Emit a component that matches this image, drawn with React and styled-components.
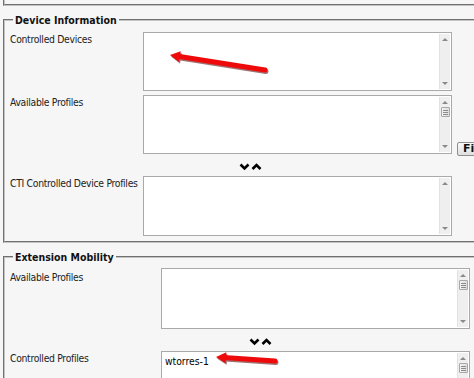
import React from 'react';
import styled, { createGlobalStyle } from 'styled-components';

const GlobalStyle = createGlobalStyle`
  body {
    margin: 0;
    background: #f6f6f6;
    overflow: hidden;
    font-family: "DejaVu Sans Condensed", "DejaVu Sans", Verdana, sans-serif;
  }
`;

const Page = styled.div`
  position: relative;
  width: 560px;
  height: 378px;
`;

const PrevSection = styled.div`
  height: 4px;
  margin-left: 3px;
  border: 2px groove #c4c4c4;
  border-top: none;
`;

const Fieldset = styled.fieldset`
  margin: 8px 0 0 3px;
  padding: ${p => p.$padTop}px 0 5px 5px;
  border: 2px groove #c4c4c4;
  min-width: 0;
`;

const Legend = styled.legend`
  margin-left: 3px;
  padding: 0 2px;
  font-size: 10.5px;
  line-height: 12px;
  font-weight: bold;
  color: #111;
`;

const Row = styled.div`
  display: flex;
  align-items: flex-end;
  margin-bottom: ${p => p.$gap || 0}px;
`;

const Label = styled.div`
  align-self: flex-start;
  width: ${p => p.$width}px;
  flex: none;
  padding-top: ${p => p.$top || 1}px;
  font-size: 10.3px;
  line-height: 13px;
  letter-spacing: -0.3px;
  color: #222;
  white-space: nowrap;
`;

const ListBox = styled.div`
  display: flex;
  width: 309px;
  height: ${p => p.$height}px;
  box-sizing: border-box;
  border: 1px solid #a9a9a9;
  background: #fff;
  flex: none;
`;

const Options = styled.div`
  flex: 1;
  padding: 3px 3px;
  font-size: 10.3px;
  line-height: 13px;
  color: #000;
`;

const ScrollBar = styled.div`
  width: 11px;
  flex: none;
  margin: 1px 1px 1px 0;
  background: #efefef;
  border-left: 1px solid #e2e2e2;
  display: flex;
  flex-direction: column;
  align-items: center;
  justify-content: space-between;
  padding: 4px 0;
  box-sizing: border-box;
`;

const ArrowUp = styled.div`
  width: 0;
  height: 0;
  border-left: 3px solid transparent;
  border-right: 3px solid transparent;
  border-bottom: 3px solid #8a8a8a;
`;

const ArrowDown = styled(ArrowUp)`
  border-bottom: none;
  border-top: 3px solid #8a8a8a;
`;

const Track = styled.div`
  flex: 1;
  width: 100%;
  padding-top: 3px;
  display: flex;
  justify-content: center;
`;

const Thumb = styled.div`
  width: 9px;
  height: 10px;
  box-sizing: border-box;
  border: 1px solid #a8a8a8;
  border-radius: 1px;
  background: linear-gradient(to right, #f4f4f4, #dcdcdc);
  display: flex;
  flex-direction: column;
  justify-content: center;
  align-items: center;
  gap: 1px;

  span {
    display: block;
    width: 5px;
    height: 1px;
    background: #8c8c8c;
  }
`;

const FindButton = styled.button`
  margin-left: 5px;
  margin-bottom: -2px;
  height: 14px;
  padding: 0 5px;
  border: 1px solid #8f8f8f;
  border-radius: 2px;
  background: linear-gradient(#fbfbfb, #dedede);
  font-family: "DejaVu Sans", Verdana, sans-serif;
  font-size: 11px;
  line-height: 12px;
  font-weight: bold;
  color: #111;
  flex: none;
`;

const MoveRow = styled.div`
  height: 22px;
  display: flex;
  align-items: center;
  padding-left: ${p => p.$left}px;
  padding-top: 3px;
  box-sizing: border-box;
`;

const Overlay = styled.svg`
  position: absolute;
  left: 0;
  top: 0;
  pointer-events: none;
`;

const Scroll = ({ thumb }) => (
  <ScrollBar>
    <ArrowUp />
    <Track>
      {thumb && (
        <Thumb>
          <span />
          <span />
          <span />
        </Thumb>
      )}
    </Track>
    <ArrowDown />
  </ScrollBar>
);

const Box = ({ height, thumb, children }) => (
  <ListBox $height={height}>
    <Options>{children}</Options>
    <Scroll thumb={thumb} />
  </ListBox>
);

const Chevrons = () => (
  <svg width="24" height="8" viewBox="0 0 24 8">
    <polyline points="1.5,1.5 5.5,5.5 9.5,1.5" fill="none" stroke="#000" strokeWidth="2.6" />
    <polyline points="13.5,6 17.5,2 21.5,6" fill="none" stroke="#000" strokeWidth="2.6" />
  </svg>
);

const RedArrow = ({ tip, tail }) => {
  const dx = tip[0] - tail[0];
  const dy = tip[1] - tail[1];
  const len = Math.hypot(dx, dy);
  const ux = dx / len;
  const uy = dy / len;
  const bx = tip[0] - ux * 10;
  const by = tip[1] - uy * 10;
  const px = -uy * 5.5;
  const py = ux * 5.5;
  const head = `${tip[0]},${tip[1]} ${bx + px},${by + py} ${bx - px},${by - py}`;
  const sx = tip[0] - ux * 8;
  const sy = tip[1] - uy * 8;
  return (
    <g>
      <g transform="translate(1,1.5)" opacity="0.55">
        <line x1={sx} y1={sy} x2={tail[0]} y2={tail[1]} stroke="#500" strokeWidth="5" strokeLinecap="round" />
        <polygon points={head} fill="#500" />
      </g>
      <line x1={sx} y1={sy} x2={tail[0]} y2={tail[1]} stroke="#ee0a0a" strokeWidth="5" strokeLinecap="round" />
      <polygon points={head} fill="#ee0a0a" />
    </g>
  );
};

export default function App() {
  return (
    <>
      <GlobalStyle />
      <Page>
        <PrevSection />

        <Fieldset $padTop={6}>
          <Legend>Device Information</Legend>
          <Row $gap={4}>
            <Label $width={133}>Controlled Devices</Label>
            <Box height={59} />
          </Row>
          <Row>
            <Label $width={133}>Available Profiles</Label>
            <Box height={59} thumb />
            <FindButton>Find</FindButton>
          </Row>
          <MoveRow $left={229}>
            <Chevrons />
          </MoveRow>
          <Row>
            <Label $width={133}>CTI Controlled Device Profiles</Label>
            <Box height={60} />
          </Row>
        </Fieldset>

        <Fieldset $padTop={5}>
          <Legend>Extension Mobility</Legend>
          <Row>
            <Label $width={151} $top={3}>Available Profiles</Label>
            <Box height={61} thumb />
          </Row>
          <MoveRow $left={239}>
            <Chevrons />
          </MoveRow>
          <Row>
            <Label $width={151} $top={0}>Controlled Profiles</Label>
            <Box height={60} thumb>wtorres-1</Box>
          </Row>
        </Fieldset>

        <Overlay width="474" height="378">
          <RedArrow tip={[170, 55]} tail={[265, 70]} />
          <RedArrow tip={[216, 357]} tail={[275, 361]} />
        </Overlay>
      </Page>
    </>
  );
}
